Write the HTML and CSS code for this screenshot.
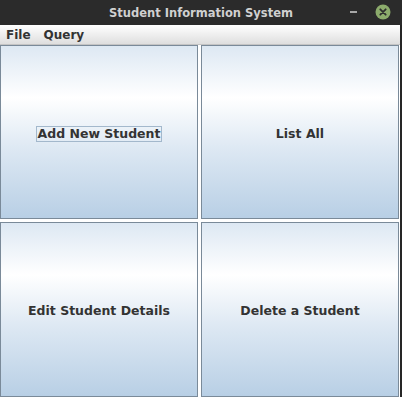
FILE: index.html
```html
<!DOCTYPE html>
<html>
<head>
<meta charset="utf-8">
<link rel="stylesheet" href="styles.css">
</head>
<body>
<div class="titlebar">
  <span class="title">Student Information System</span>
  <span class="minimize"></span>
  <span class="close">
    <svg width="16" height="16" viewBox="0 0 16 16">
      <circle cx="8" cy="8" r="7.5" fill="#8cab6c"/>
      <path d="M5.3 5.3 L10.7 10.7 M10.7 5.3 L5.3 10.7" stroke="#2e2e2e" stroke-width="1.8" stroke-linecap="round"/>
    </svg>
  </span>
</div>
<div class="window">
  <div class="content">
    <div class="menubar">
      <span class="menu">File</span>
      <span class="menu">Query</span>
    </div>
    <div class="grid">
      <div class="btn"><span class="label focused">Add New Student</span></div>
      <div class="btn"><span class="label">List All</span></div>
      <div class="btn"><span class="label">Edit Student Details</span></div>
      <div class="btn"><span class="label">Delete a Student</span></div>
    </div>
  </div>
  <div class="edge"></div>
</div>
</body>
</html>
```
FILE: styles.css
```css
html, body {
  margin: 0;
  padding: 0;
  width: 402px;
  height: 397px;
  overflow: hidden;
  background: #2b2b2b;
  font-family: "DejaVu Sans", sans-serif;
}

.titlebar {
  position: relative;
  height: 25px;
  background: #2b2b2b;
  display: flex;
  align-items: center;
  justify-content: center;
}

.title {
  color: #d0d0d0;
  font-weight: bold;
  font-size: 11.5px;
  padding-top: 1px;
}

.minimize {
  position: absolute;
  left: 350px;
  top: 11px;
  width: 7px;
  height: 2px;
  background: #a8a8a8;
}

.close {
  position: absolute;
  left: 375px;
  top: 4px;
  width: 16px;
  height: 16px;
  display: block;
}

.close svg {
  display: block;
}

.window {
  display: flex;
  height: 372px;
}

.content {
  width: 400px;
  background: #ffffff;
  display: flex;
  flex-direction: column;
}

.edge {
  width: 2px;
  background: #262626;
}

.menubar {
  height: 19px;
  border-bottom: 1px solid #c4c4c4;
  background: linear-gradient(to bottom, #ffffff, #dedede);
  display: flex;
  align-items: center;
  padding-left: 6px;
  gap: 13px;
}

.menu {
  font-size: 12px;
  font-weight: bold;
  color: #333333;
  line-height: 14px;
}

.grid {
  display: grid;
  grid-template-columns: 198px 198px;
  grid-template-rows: 174px 175px;
  gap: 3px;
}

.btn {
  box-sizing: border-box;
  border: 1px solid #7a8a99;
  background: linear-gradient(to bottom, #dde8f3 0%, #ffffff 30%, #dde8f3 60%, #b8cfe5 100%);
  display: flex;
  align-items: center;
  justify-content: center;
  padding-top: 3px;
}

.label {
  font-size: 12.5px;
  font-weight: bold;
  color: #333333;
  line-height: 14px;
  padding: 0 1px;
  border: 1px solid transparent;
}

.label.focused {
  border-color: #a3b8cc;
}
```
